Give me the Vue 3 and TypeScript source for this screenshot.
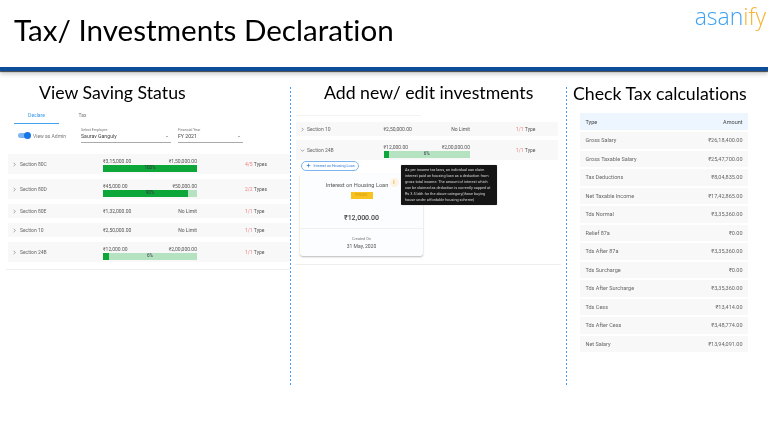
<script setup lang="ts">
interface Sec { name: string; used: string; limit: string; pct?: number; frac: string; unit: string }
const status: Sec[] = [
  { name: 'Section 80C', used: '₹3,15,000.00', limit: '₹1,50,000.00', pct: 100, frac: '4/5', unit: 'Types' },
  { name: 'Section 80D', used: '₹45,000.00', limit: '₹50,000.00', pct: 90, frac: '2/2', unit: 'Types' },
  { name: 'Section 80E', used: '₹1,32,000.00', limit: 'No Limit', frac: '1/1', unit: 'Type' },
  { name: 'Section 10', used: '₹2,50,000.00', limit: 'No Limit', frac: '1/1', unit: 'Type' },
  { name: 'Section 24B', used: '₹12,000.00', limit: '₹2,00,000.00', pct: 6, frac: '1/1', unit: 'Type' },
]
const invest: Sec[] = [status[3], status[4]]
const tipLines: string[] = [
  'As per income tax laws, an individual can claim',
  'interest paid on housing loan as a deduction from',
  'gross total income. The amount of interest which',
  'can be claimed as deduction is currently capped at',
  'Rs 3.5 lakh for the above category(those buying',
  'house under affordable housing scheme)',
]
const taxRows: [string, string][] = [
  ['Gross Salary', '₹26,18,400.00'],
  ['Gross Taxable Salary', '₹25,47,700.00'],
  ['Tax Deductions', '₹8,04,835.00'],
  ['Net Taxable Income', '₹17,42,865.00'],
  ['Tds Normal', '₹3,35,360.00'],
  ['Relief 87a', '₹0.00'],
  ['Tds After 87a', '₹3,35,360.00'],
  ['Tds Surcharge', '₹0.00'],
  ['Tds After Surcharge', '₹3,35,360.00'],
  ['Tds Cess', '₹13,414.00'],
  ['Tds After Cess', '₹3,48,774.00'],
  ['Net Salary', '₹13,94,091.00'],
]
</script>

<template>
  <div class="slide">
    <header class="top">
      <h1>Tax/ Investments Declaration</h1>
      <div class="logo">asan<span>ify</span></div>
    </header>
    <div class="rule"></div>
    <main class="cols">
      <section class="col one">
        <h2>View Saving Status</h2>
        <div class="soft">
          <div class="tabs">
            <div class="tab active">Declare</div>
            <div class="tab">Tax</div>
          </div>
          <div class="filters">
            <div class="toggle"><i></i></div>
            <span class="admin">View as Admin</span>
            <div class="select emp">
              <label>Select Employee</label>
              <div>Saurav Ganguly<b></b></div>
            </div>
            <div class="select fy">
              <label>Financial Year</label>
              <div>FY 2021<b></b></div>
            </div>
          </div>
          <div class="rows">
            <div v-for="s in status" :key="s.name" class="row" :class="{ tall: s.pct }">
              <svg class="chev" viewBox="0 0 6 6"><path d="M2 1l2 2-2 2" fill="none" stroke="#666" stroke-width=".7" /></svg>
              <span class="name">{{ s.name }}</span>
              <div class="amt">
                <div class="nums"><span>{{ s.used }}</span><span>{{ s.limit }}</span></div>
                <div v-if="s.pct" class="bar"><i :style="{ width: s.pct + '%' }"></i><em>{{ s.pct }}%</em></div>
              </div>
              <span class="types"><u>{{ s.frac }}</u> {{ s.unit }}</span>
            </div>
          </div>
          <div class="end"></div>
        </div>
      </section>

      <section class="col two">
        <h2>Add new/ edit investments</h2>
        <div class="soft">
          <div class="faint"></div>
          <div class="rows">
            <div v-for="(s, i) in invest" :key="s.name" class="row" :class="{ tall: s.pct }">
              <svg class="chev" viewBox="0 0 6 6"><path :d="i ? 'M1 2l2 2 2-2' : 'M2 1l2 2-2 2'" fill="none" stroke="#666" stroke-width=".7" /></svg>
              <span class="name">{{ s.name }}</span>
              <div class="amt">
                <div class="nums"><span>{{ s.used }}</span><span>{{ s.limit }}</span></div>
                <div v-if="s.pct" class="bar"><i :style="{ width: s.pct + '%' }"></i><em>{{ s.pct }}%</em></div>
              </div>
              <span class="types"><u>{{ s.frac }}</u> {{ s.unit }}</span>
            </div>
          </div>
          <div class="chip">
            <svg viewBox="0 0 6 6"><path d="M3 .8v4.4M.8 3h4.4" stroke="#1976d2" stroke-width=".8" /></svg>
            Interest on Housing Loan
          </div>
          <div class="card-wrap">
            <article class="card">
              <div class="card-title">Interest on Housing Loan</div>
              <div class="badge">PENDING</div>
              <div class="money">₹12,000.00</div>
              <div class="created">Created On</div>
              <div class="date">31 May, 2020</div>
            </article>
            <div class="info">i</div>
            <div class="tip"><div v-for="l in tipLines" :key="l">{{ l }}</div></div>
          </div>
          <div class="end"></div>
        </div>
      </section>

      <section class="col three">
        <h2>Check Tax calculations</h2>
        <div class="soft table">
          <div class="thead"><span>Type</span><span>Amount</span></div>
          <div v-for="r in taxRows" :key="r[0]" class="trow"><span>{{ r[0] }}</span><span>{{ r[1] }}</span></div>
        </div>
      </section>
    </main>
  </div>
</template>

<style>
html, body { margin: 0; background: #fff; }
</style>

<style scoped>
.slide { width: 768px; height: 422px; overflow: hidden; background: #fff; font-family: Roboto, sans-serif; color: #555; }
.top { height: 67px; display: flex; justify-content: space-between; box-sizing: border-box; padding: 0 2px 0 14px; }
h1 { margin: 11px 0 0; font: 400 29.6px/38px Lato, sans-serif; font-variant-ligatures: none; color: #000; filter: blur(.3px); }
.logo { margin-top: 0; font: 300 23px/32px "Open Sans", sans-serif; color: #3ba1f4; filter: blur(.25px); }
.logo span { color: #f5b430; }
.rule { height: 4px; background: #0f4c9a; box-shadow: 0 1px 1px #444, 0 3px 4px rgba(0,0,0,.22); }
.cols { display: grid; grid-template-columns: 290px 276px 202px; margin-top: 11px; }
.col { height: 303px; box-sizing: border-box; }
.two, .three { background: repeating-linear-gradient(#4d9be8 0 2px, transparent 2px 4px) 0 5px / 1px 298px no-repeat; }
h2 { margin: 0; height: 25px; font: 400 17.7px/22px Lato, sans-serif; font-variant-ligatures: none; color: #000; white-space: nowrap; filter: blur(.25px); }
.one h2 { padding-left: 39px; }
.two h2 { padding-left: 34px; }
.three h2 { padding-left: 7px; margin-top: 1px; height: 30px; }
.soft { filter: blur(.4px); }

.tabs { display: flex; padding-left: 14px; margin-top: -1px; height: 20px; font-size: 5px; }
.tab { width: 45px; text-align: center; line-height: 18px; color: #777; margin-right: 1px; }
.tab.active { color: #3a97ee; border-bottom: 1.5px solid #45a2f2; height: 17px; }
.filters { display: flex; align-items: center; height: 28px; margin: -2.5px 0 2.5px; padding-left: 18px; }
.toggle { position: relative; width: 12px; height: 4.5px; border-radius: 3px; background: #7db7f3; margin-top: -4px; }
.toggle i { position: absolute; right: -1px; top: -1.2px; width: 7px; height: 7px; border-radius: 50%; background: #1976e8; }
.admin { font-size: 5px; margin: -4px 0 0 3px; width: 48px; color: #777; }
.select { font-size: 5.2px; margin: -4px 7px 0 0; color: #444; border-bottom: .7px solid #aaa; }
.select label { display: block; font-size: 3.6px; line-height: 5px; color: #777; }
.select div { position: relative; line-height: 7px; padding-bottom: 1.5px; }
.select b { position: absolute; right: 3px; top: 3px; border: 1.3px solid transparent; border-top: 1.6px solid #666; border-bottom: 0; }
.emp { width: 90px; }
.fy { width: 65px; }

.rows { display: flex; flex-direction: column; gap: 5px; }
.row { display: grid; align-items: center; height: 14px; background: #f8f8f8; font-size: 5px; color: #555; }
.row.tall { height: 20px; }
.row.tall .amt { padding-top: 1.5px; }
.one .rows { margin: 0 0 0 8px; gap: 5px; }
.one .row { grid-template-columns: 12px 83px 94px 1fr; }
.one .types { padding-left: 48px; }
.two .row { grid-template-columns: 11px 76.5px 86.5px 1fr; margin-right: 8px; }
.two .types { padding-left: 46px; }
.chev { width: 5px; height: 5px; margin-left: 4px; }
.name { white-space: nowrap; color: #666; }
.nums { display: flex; justify-content: space-between; line-height: 6.5px; }
.bar { position: relative; height: 6.5px; margin-top: .5px; background: #b5e2c1; overflow: hidden; }
.bar i { display: block; height: 100%; background: #0da638; }
.bar em { position: absolute; inset: 0; text-align: center; font: 400 4.6px/6.5px Roboto, sans-serif; color: #334; }
.types { white-space: nowrap; }
.types u { text-decoration: none; color: #ef7f7f; }
.end { border-top: 1px solid #eee; }
.one .end { margin: 7px 0 0 6px; }

.two .soft { padding-left: 6px; }
.faint { margin: 8px 0 6px 0; width: 125px; border-top: 1px solid #f3f3f3; }
.two .rows { gap: 4px; }
.chip { display: flex; align-items: center; gap: 2.5px; box-sizing: border-box; width: 58px; height: 9.5px; margin: 1px 0 0 5px; padding-left: 4px; border: .8px solid #7db5ef; border-radius: 6px; font-size: 3.7px; color: #2f7fd6; white-space: nowrap; }
.chip svg { width: 5px; height: 5px; flex: none; }
.card-wrap { position: relative; height: 93px; padding-top: 3px; box-sizing: border-box; }
.card { box-sizing: border-box; width: 123px; height: 82px; margin-left: 4px; padding-top: 7px; border-radius: 3px; text-align: center; background: #fcfdff; box-shadow: 0 1px 2px rgba(0,0,0,.28); }
.card-title { font-size: 5.6px; line-height: 9px; color: #555; transform: translateX(-4.5px); }
.badge { width: 22px; height: 6.5px; margin: 2.5px auto 0 auto; background: #f9c31f; color: #ce9a10; font-size: 2.8px; line-height: 6.5px; }
.money { margin-top: 15px; padding-bottom: 5px; border-bottom: 1px solid #eef0f3; font-size: 7px; line-height: 9px; font-weight: 500; color: #444; }
.created { margin-top: 7px; font-size: 3.8px; line-height: 5px; color: #777; }
.date { margin-top: 2px; font-size: 5px; line-height: 6px; color: #555; }
.info { position: absolute; left: 93.5px; top: 7.5px; width: 9px; height: 9px; border-radius: 50%; background: #fdf3e2; color: #e3a135; font: 500 5px/9px Roboto, sans-serif; text-align: center; }
.tip { position: absolute; left: 105px; top: -5.5px; width: 96px; height: 39.5px; box-sizing: border-box; padding: 2px 4px; background: #151515; border-radius: 1px; color: #d6d6d6; font-size: 3.8px; line-height: 6px; white-space: nowrap; box-shadow: 0 0 1px #888; }
.two .end { margin: 0 0 0 -1px; width: 266px; }

.table { margin: 0 0 0 14px; width: 168px; display: flex; flex-direction: column; gap: 2px; font-size: 5.5px; }
.thead, .trow { display: flex; justify-content: space-between; align-items: center; padding: 0 5.5px; height: 16.5px; }
.thead { height: 17px; background: #edf6fe; color: #444; }
.trow { background: #f8f8f8; color: #666; }
</style>
